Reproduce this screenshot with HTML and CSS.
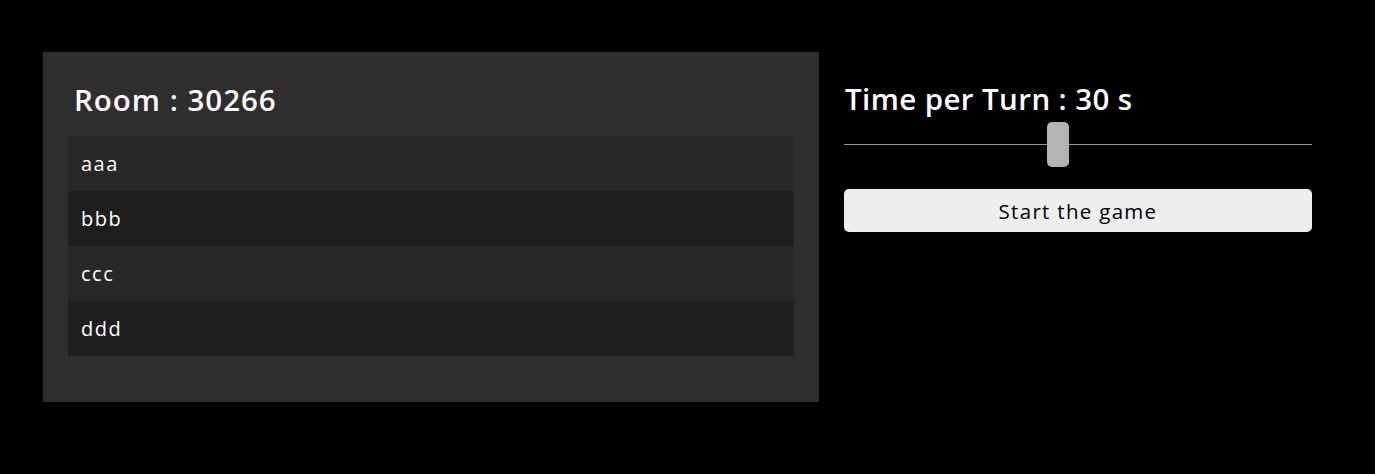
FILE: index.html
```html
<!DOCTYPE html>
<html lang="en">
<head>
  <meta charset="UTF-8">
  <meta name="viewport" content="width=device-width, initial-scale=1.0">
  <title>Lobby</title>
  <link rel="stylesheet" href="styles.css">
</head>
<body>

  <div class="lobby">
    <div class="room-panel">
      <h2 class="room-title">Room : 30266</h2>
      <ul class="player-list">
        <li class="player">aaa</li>
        <li class="player">bbb</li>
        <li class="player">ccc</li>
        <li class="player">ddd</li>
      </ul>
    </div>

    <div class="settings">
      <h2 class="time-title">Time per Turn : <span id="time-value">30</span> s</h2>
      <input type="range" id="time-slider" class="slider" min="5" max="60" value="30">
      <button class="start-btn">Start the game</button>
    </div>
  </div>

  <script>
    const slider = document.getElementById('time-slider');
    slider.addEventListener('input', () => {
      document.getElementById('time-value').textContent = slider.value;
    });
  </script>
</body>
</html>
```

FILE: styles.css
```css
body {
  margin: 0;
  background-color: #000;
  color: #fff;
  font-family: 'Open Sans', 'Noto Sans', sans-serif;
}

.lobby {
  display: flex;
  align-items: flex-start;
  gap: 25px;
  padding: 52px 0 0 43px;
}

.room-panel {
  width: 726px;
  background-color: #2f2d2e;
  padding: 25px 25px 46px 25px;
}

.room-title,
.time-title {
  margin: 0;
  font-size: 29.5px;
  font-weight: 600;
  line-height: 46px;
  letter-spacing: 0.4px;
}

.room-title {
  padding-left: 6px;
  margin-bottom: 13px;
  letter-spacing: 1px;
}

.player-list {
  list-style: none;
  margin: 0;
  padding: 0;
}

.player {
  height: 55px;
  line-height: 55px;
  padding-left: 13px;
  font-size: 20px;
  letter-spacing: 1.5px;
  background-color: #282828;
}

.player:nth-child(even) {
  background-color: #1e1e1e;
}

.settings {
  width: 468px;
  display: flex;
  flex-direction: column;
  padding-top: 24px;
}

.time-title {
  padding-left: 1px;
}

.slider {
  -webkit-appearance: none;
  appearance: none;
  width: 100%;
  height: 45px;
  margin: 0;
  background: transparent;
}

.slider::-webkit-slider-runnable-track {
  height: 1px;
  background-color: #999;
}

.slider::-webkit-slider-thumb {
  -webkit-appearance: none;
  width: 22px;
  height: 45px;
  margin-top: -22px;
  border-radius: 5px;
  background-color: #b3b3b3;
}

.start-btn {
  margin-top: 22px;
  height: 43px;
  border: none;
  border-radius: 5px;
  background-color: #eee;
  color: #000;
  font-family: inherit;
  font-size: 20.5px;
  letter-spacing: 1.3px;
  cursor: pointer;
}
```
